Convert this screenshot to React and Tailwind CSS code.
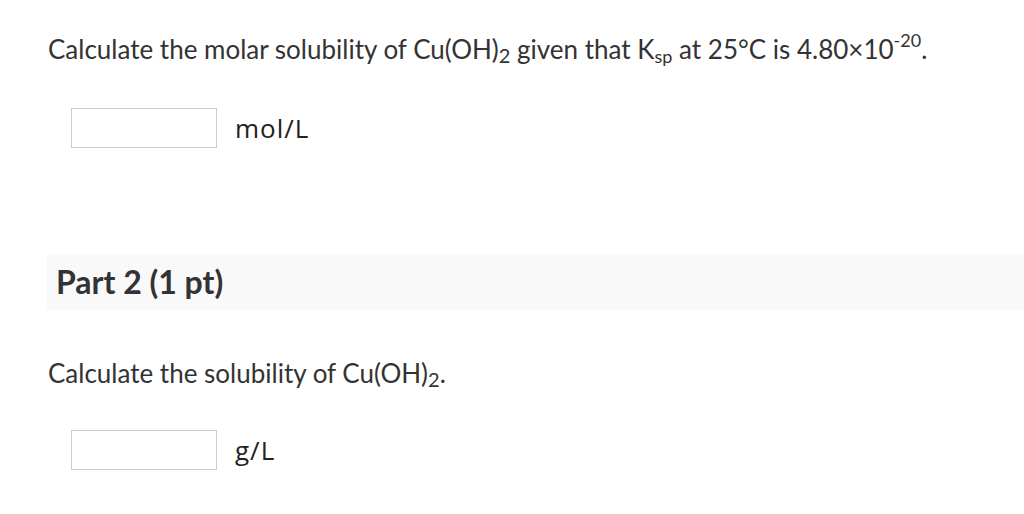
import React from "react";

const AnswerRow = ({ unit }) => (
  <div className="flex items-center gap-[18px] pl-[23px]">
    <input
      type="text"
      className="w-[146px] h-[40px] border border-[#cccccc] bg-white outline-none"
    />
    <span className="text-[26px] leading-[30px] text-[#222] font-['Open_Sans',sans-serif] tracking-[1px]">
      {unit}
    </span>
  </div>
);

const App = () => {
  return (
    <div className="w-[1024px] h-[514px] bg-white overflow-hidden font-['Lato',sans-serif] text-[#333]">
      <section className="flex flex-col gap-[44px] pl-[48px] pt-[34px]">
        <p className="text-[26px] leading-[30px]">
          Calculate the molar solubility of Cu(OH)
          <sub className="text-[20px] bottom-[-4px]">2</sub> given that K
          <sub className="text-[18px] bottom-[-4px]">sp</sub> at 25°C is 4.80×10
          <sup className="text-[18px] top-[-12px]">-20</sup>.
        </p>
        <AnswerRow unit="mol/L" />
      </section>

      <div className="ml-[47px] mt-[106px] h-[56px] bg-[#f9f9f9] flex items-center pl-[9px]">
        <h2 className="text-[32px] leading-none font-bold text-[#333]">Part 2 (1 pt)</h2>
      </div>

      <section className="flex flex-col gap-[42px] pl-[48px] pt-[48px]">
        <p className="text-[26px] leading-[30px]">
          Calculate the solubility of Cu(OH)
          <sub className="text-[20px] bottom-[-4px]">2</sub>.
        </p>
        <AnswerRow unit="g/L" />
      </section>
    </div>
  );
};

export default App;
